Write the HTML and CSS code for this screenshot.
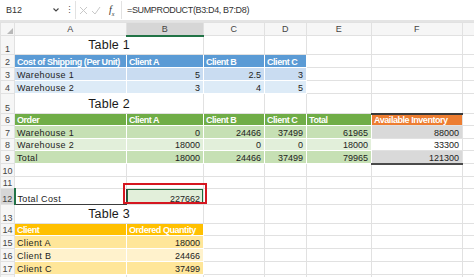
FILE: index.html
```html
<!DOCTYPE html>
<html lang="en">
<head>
    <meta charset="UTF-8">
    <title>Shipping Cost - SUMPRODUCT</title>
    <link rel="stylesheet" href="styles.css">
</head>
<body>
    <!-- Formula Bar -->
    <div class="formula-bar">
        <div class="name-box">
            <span>B12</span>
            <svg class="chevron" width="6" height="4" viewBox="0 0 6 4"><path d="M0.5 0.5 L3 3 L5.5 0.5" fill="none" stroke="#444" stroke-width="1.1"/></svg>
        </div>
        <div class="dots">&#8942;</div>
        <div class="fx-buttons">
            <svg width="9" height="9" viewBox="0 0 9 9"><path d="M1 1 L8 8 M8 1 L1 8" stroke="#c8c8c8" stroke-width="1"/></svg>
            <svg width="10" height="9" viewBox="0 0 10 9"><path d="M1 5 L4 8 L9 1" fill="none" stroke="#c8c8c8" stroke-width="1"/></svg>
            <span class="fx">f<sub>x</sub></span>
        </div>
        <div class="formula">=SUMPRODUCT(B3:D4, B7:D8)</div>
    </div>

    <!-- Sheet -->
    <div class="sheet">
        <table class="grid">
            <colgroup>
                <col class="c-rh"><col class="c-a"><col class="c-b"><col class="c-c"><col class="c-d"><col class="c-e"><col class="c-f"><col class="c-g">
            </colgroup>
            <tr class="head-row">
                <td class="corner"><span class="corner-mark"></span></td>
                <td class="col-head">A</td>
                <td class="col-head active">B</td>
                <td class="col-head">C</td>
                <td class="col-head">D</td>
                <td class="col-head">E</td>
                <td class="col-head">F</td>
                <td class="col-head"></td>
            </tr>
            <tr class="tall">
                <td class="row-head">1</td>
                <td class="title" colspan="2">Table 1</td>
                <td></td><td></td><td></td><td></td><td></td>
            </tr>
            <tr>
                <td class="row-head">2</td>
                <td class="blue-head th">Cost of Shipping (Per Unit)</td>
                <td class="blue-head th">Client A</td>
                <td class="blue-head th">Client B</td>
                <td class="blue-head th">Client C</td>
                <td></td><td></td><td></td>
            </tr>
            <tr>
                <td class="row-head">3</td>
                <td class="blue-1">Warehouse 1</td>
                <td class="blue-1 num">5</td>
                <td class="blue-1 num">2.5</td>
                <td class="blue-1 num">3</td>
                <td></td><td></td><td></td>
            </tr>
            <tr>
                <td class="row-head">4</td>
                <td class="blue-2">Warehouse 2</td>
                <td class="blue-2 num">3</td>
                <td class="blue-2 num">4</td>
                <td class="blue-2 num">5</td>
                <td></td><td></td><td></td>
            </tr>
            <tr class="taller">
                <td class="row-head">5</td>
                <td class="title" colspan="2">Table 2</td>
                <td></td><td></td><td></td><td></td><td></td>
            </tr>
            <tr class="short">
                <td class="row-head">6</td>
                <td class="green-head th">Order</td>
                <td class="green-head th">Client A</td>
                <td class="green-head th">Client B</td>
                <td class="green-head th">Client C</td>
                <td class="green-head th">Total</td>
                <td class="orange-head th">Available Inventory</td>
                <td></td>
            </tr>
            <tr>
                <td class="row-head">7</td>
                <td class="green-1">Warehouse 1</td>
                <td class="green-1 num">0</td>
                <td class="green-1 num">24466</td>
                <td class="green-1 num">37499</td>
                <td class="green-1 num">61965</td>
                <td class="gray num">88000</td>
                <td></td>
            </tr>
            <tr class="short">
                <td class="row-head">8</td>
                <td class="green-2">Warehouse 2</td>
                <td class="green-2 num">18000</td>
                <td class="green-2 num">0</td>
                <td class="green-2 num">0</td>
                <td class="green-2 num">18000</td>
                <td class="num">33300</td>
                <td></td>
            </tr>
            <tr>
                <td class="row-head">9</td>
                <td class="green-1">Total</td>
                <td class="green-1 num">18000</td>
                <td class="green-1 num">24466</td>
                <td class="green-1 num">37499</td>
                <td class="green-1 num">79965</td>
                <td class="gray num last">121300</td>
                <td></td>
            </tr>
            <tr>
                <td class="row-head">10</td>
                <td></td><td></td><td></td><td></td><td></td><td></td><td></td>
            </tr>
            <tr class="short">
                <td class="row-head">11</td>
                <td></td><td></td><td></td><td></td><td></td><td></td><td></td>
            </tr>
            <tr class="mid">
                <td class="row-head active">12</td>
                <td class="boxed">Total Cost</td>
                <td class="result num">227662</td>
                <td></td><td></td><td></td><td></td><td></td>
            </tr>
            <tr class="tall">
                <td class="row-head">13</td>
                <td class="title" colspan="2">Table 3</td>
                <td></td><td></td><td></td><td></td><td></td>
            </tr>
            <tr class="short">
                <td class="row-head">14</td>
                <td class="gold-head th">Client</td>
                <td class="gold-head th">Ordered Quantity</td>
                <td></td><td></td><td></td><td></td><td></td>
            </tr>
            <tr>
                <td class="row-head">15</td>
                <td class="gold-1">Client A</td>
                <td class="gold-1 num">18000</td>
                <td></td><td></td><td></td><td></td><td></td>
            </tr>
            <tr>
                <td class="row-head">16</td>
                <td class="gold-2">Client B</td>
                <td class="gold-2 num">24466</td>
                <td></td><td></td><td></td><td></td><td></td>
            </tr>
            <tr>
                <td class="row-head">17</td>
                <td class="gold-1">Client C</td>
                <td class="gold-1 num">37499</td>
                <td></td><td></td><td></td><td></td><td></td>
            </tr>
            <tr>
                <td class="row-head"></td>
                <td></td><td></td><td></td><td></td><td></td><td></td><td></td>
            </tr>
        </table>

        <!-- Red highlight around the result -->
        <div class="highlight"></div>
    </div>
</body>
</html>
```

FILE: styles.css
```css
/* Base */
* {
    box-sizing: border-box;
}

body {
    margin: 0;
    width: 474px;
    height: 277px;
    overflow: hidden;
    background-color: #ffffff;
    font-family: 'Liberation Sans', Arial, sans-serif;
    color: #222222;
}

/* Formula Bar */
.formula-bar {
    display: flex;
    height: 22px;
    border-bottom: 2px solid #e4e4e4;
    font-size: 9px;
    color: #333333;
}

.name-box {
    width: 64px;
    display: flex;
    align-items: center;
    justify-content: space-between;
    padding: 0 5px 0 6px;
}

.dots {
    width: 11px;
    display: flex;
    align-items: center;
    justify-content: center;
    color: #555555;
    font-size: 9px;
}

.fx-buttons {
    width: 47px;
    display: flex;
    align-items: center;
    gap: 3px;
    padding-left: 3px;
    border-left: 1px solid #e2e2e2;
    border-right: 1px solid #e2e2e2;
    margin: 1px 0;
}

.fx {
    font-family: 'Liberation Serif', 'Times New Roman', serif;
    font-style: italic;
    font-size: 10px;
    color: #333333;
    margin-left: 5px;
}

.fx sub {
    font-size: 6px;
}

.formula {
    flex: 1;
    display: flex;
    align-items: center;
    padding-left: 5px;
    letter-spacing: -0.35px;
}

/* Sheet */
.sheet {
    position: relative;
}

.grid {
    border-collapse: collapse;
    table-layout: fixed;
    width: 474px;
    font-size: 9px;
}

.c-rh { width: 14px; }
.c-a { width: 112px; }
.c-b { width: 77px; }
.c-c { width: 61px; }
.c-d { width: 42px; }
.c-e { width: 65px; }
.c-f { width: 91px; }
.c-g { width: 12px; }

.grid tr {
    height: 13px;
}

.grid tr.short { height: 12px; }
.grid tr.mid { height: 16px; }
.grid tr.tall { height: 19px; }
.grid tr.taller { height: 20px; }

.grid td {
    border: 1px solid #e1e1e1;
    padding: 0 2px;
    line-height: 10px;
    vertical-align: bottom;
    white-space: nowrap;
    overflow: hidden;
    letter-spacing: 0.35px;
}

/* Headers */
.corner {
    position: relative;
    background-color: #f6f6f6;
}

.corner-mark {
    position: absolute;
    right: 1px;
    bottom: 1px;
    border-style: solid;
    border-width: 0 0 6px 6px;
    border-color: transparent transparent #b8b8b8 transparent;
}

.col-head {
    background-color: #f6f6f6;
    color: #444444;
    text-align: center;
    vertical-align: middle !important;
}

.col-head.active {
    background-color: #d6d6d6;
    border-bottom: 2px solid #217346;
}

.row-head {
    background-color: #f6f6f6;
    color: #444444;
    text-align: center;
    padding: 0 !important;
    letter-spacing: 0 !important;
}

.row-head.active {
    background-color: #d6d6d6;
    border-right: 2px solid #217346;
}

/* Cell types */
.title {
    font-size: 12.5px;
    text-align: center;
    vertical-align: middle !important;
    line-height: 14px !important;
    letter-spacing: 0.2px !important;
    color: #1a1a1a;
}

.num {
    text-align: right;
    letter-spacing: 0 !important;
    padding-right: 3px !important;
}

.th {
    font-weight: bold;
    color: #ffffff;
    letter-spacing: -0.45px !important;
}

/* Table 1 - blue */
.blue-head { background-color: #5b9bd5; border-color: #ffffff !important; }
.blue-1 { background-color: #c9dcf1; border-color: #ffffff !important; }
.blue-2 { background-color: #ddebf7; border-color: #ffffff !important; }

/* Table 2 - green */
.green-head { background-color: #70ad47; border-color: #ffffff !important; }
.green-1 { background-color: #c6e0b4; border-color: #ffffff !important; }
.green-2 { background-color: #e2efda; border-color: #ffffff !important; }

.orange-head {
    background-color: #ed7d31;
    border-top: 2px solid #3a3a3a !important;
}

.gray { background-color: #d9d9d9; }

.gray.last {
    border-bottom: 2px solid #4a4a4a !important;
}

/* Table 3 - gold */
.gold-head { background-color: #ffc000; border-color: #ffffff !important; }
.gold-1 { background-color: #ffe699; border-color: #ffffff !important; }
.gold-2 { background-color: #fff2cc; border-color: #ffffff !important; }

/* Result row */
.boxed {
    border: 1px solid #3c3c3c !important;
}

.result {
    background-color: #e2efda;
    box-shadow: inset 0 0 0 1px #1e6b3c;
}

.highlight {
    position: absolute;
    left: 123px;
    top: 161px;
    width: 84px;
    height: 21px;
    border: 2.5px solid #d51720;
}
```
